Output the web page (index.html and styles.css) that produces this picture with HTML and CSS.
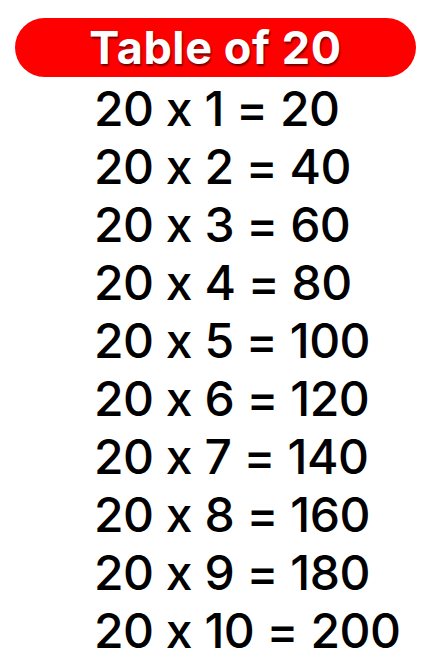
FILE: index.html
```html
<!DOCTYPE html>
<html lang="en">
<head>
<meta charset="utf-8">
<title>Table of 20</title>
<link rel="stylesheet" href="styles.css">
</head>
<body>
<main class="page">
  <h1 class="title">Table of 20</h1>
  <ul class="table">
    <li class="row">20 x 1 = 20</li>
    <li class="row">20 x 2 = 40</li>
    <li class="row">20 x 3 = 60</li>
    <li class="row">20 x 4 = 80</li>
    <li class="row">20 x 5 = 100</li>
    <li class="row">20 x 6 = 120</li>
    <li class="row">20 x 7 = 140</li>
    <li class="row">20 x 8 = 160</li>
    <li class="row">20 x 9 = 180</li>
    <li class="row">20 x 10 = 200</li>
  </ul>
</main>
</body>
</html>
```

FILE: styles.css
```css
html, body {
  margin: 0;
  padding: 0;
  background: #ffffff;
}

.page {
  width: 438px;
  height: 665px;
  padding-top: 18px;
  box-sizing: border-box;
  font-family: Inter, "Noto Sans", sans-serif;
  font-feature-settings: "calt" 0;
  overflow: hidden;
}

.title {
  margin: 0 22px 0 15px;
  height: 59px;
  border-radius: 30px;
  background: #ff0000;
  color: #ffffff;
  font-size: 45px;
  font-weight: 700;
  letter-spacing: 0.6px;
  line-height: 59px;
  text-align: center;
  text-shadow: 1px 2px 2px rgba(0, 0, 0, 0.55);
}

.table {
  list-style: none;
  margin: 0;
  padding: 3px 0 0 94px;
}

.row {
  font-size: 48px;
  font-weight: 500;
  letter-spacing: -0.5px;
  word-spacing: 0;
  line-height: 58px;
  color: #000000;
  white-space: nowrap;
}
```
